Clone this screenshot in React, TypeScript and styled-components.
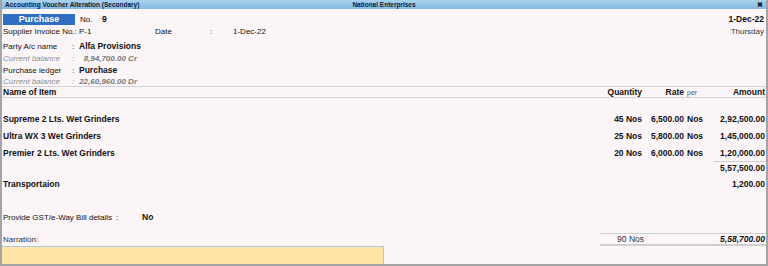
import styled, { createGlobalStyle } from 'styled-components';

const GlobalStyle = createGlobalStyle`
  html, body {
    margin: 0;
    padding: 0;
    background: #fbf5f8;
  }
  body {
    font-family: "Liberation Sans", Arial, sans-serif;
    font-size: 8px;
    color: #111;
  }
  * { box-sizing: border-box; }
`;

const Window = styled.div`
  width: 768px;
  height: 266px;
  display: flex;
  flex-direction: column;
  background: #fbf5f8;
  border-left: 2px solid #a4a4a4;
  border-right: 2px solid #a4a4a4;
  border-bottom: 2px solid #a4a4a4;
  overflow: hidden;
`;

const TitleBar = styled.div`
  height: 9px;
  flex: none;
  display: grid;
  grid-template-columns: 1fr auto 1fr;
  align-items: center;
  padding: 0 3px;
  background: linear-gradient(#a9d2ef, #83b9e0);
  color: #10203c;
  font-size: 6.5px;
  font-weight: bold;
  line-height: 9px;
`;

const TitleRight = styled.span`
  justify-self: end;
  font-size: 7px;
`;

const Body = styled.div`
  flex: 1;
  display: flex;
  flex-direction: column;
`;

const Row = styled.div<{ $h: number; $mt?: number }>`
  height: ${p => p.$h}px;
  margin-top: ${p => p.$mt ?? 0}px;
  display: flex;
  align-items: center;
  justify-content: space-between;
  flex: none;
`;

const Group = styled.div`
  display: flex;
  align-items: center;
  height: 100%;
`;

const Badge = styled.div`
  width: 72px;
  height: 11px;
  margin-left: 1px;
  background: #2f6fc3;
  color: #fff;
  font-weight: bold;
  font-size: 9px;
  display: flex;
  align-items: center;
  justify-content: center;
`;

const Cell = styled.span<{ $w?: number; $bold?: boolean; $right?: boolean; $pl?: number }>`
  display: inline-block;
  width: ${p => (p.$w ? `${p.$w}px` : 'auto')};
  font-weight: ${p => (p.$bold ? 'bold' : 'normal')};
  font-size: ${p => (p.$bold ? '8.5px' : 'inherit')};
  text-align: ${p => (p.$right ? 'right' : 'left')};
  padding-left: ${p => p.$pl ?? 0}px;
  white-space: nowrap;
`;

const Muted = styled(Cell)`
  color: #8c8c8c;
  font-style: italic;
`;

const MutedValue = styled(Cell)`
  color: #7a7a7a;
  font-style: italic;
  font-weight: bold;
`;

const RightText = styled.span<{ $bold?: boolean }>`
  padding-right: 2px;
  font-weight: ${p => (p.$bold ? 'bold' : 'normal')};
  font-size: ${p => (p.$bold ? '8.5px' : 'inherit')};
  color: ${p => (p.$bold ? '#111' : '#333')};
`;

const Grid = styled.div`
  display: grid;
  grid-template-columns: 1fr 60px 42px 30px 52px;
  align-items: center;
  font-size: 8.5px;
`;

const HeaderGrid = styled(Grid)`
  height: 12px;
  border-top: 1px solid #d2d0d2;
  border-bottom: 1px solid #d2d0d2;
  font-weight: bold;
  flex: none;
`;

const ItemRow = styled(Grid)<{ $h: number; $mt?: number }>`
  height: ${p => p.$h}px;
  margin-top: ${p => p.$mt ?? 0}px;
  font-weight: bold;
  flex: none;
`;

const Col = styled.span<{ $right?: boolean; $pl?: number; $pr?: number; $light?: boolean }>`
  text-align: ${p => (p.$right ? 'right' : 'left')};
  padding-left: ${p => p.$pl ?? 0}px;
  padding-right: ${p => p.$pr ?? 0}px;
  font-weight: ${p => (p.$light ? 'normal' : 'inherit')};
  font-size: ${p => (p.$light ? '7px' : 'inherit')};
  color: ${p => (p.$light ? '#555' : 'inherit')};
  white-space: nowrap;
`;

const SubtotalCell = styled.span`
  grid-column: 5;
  text-align: right;
  padding-right: 1px;
  align-self: stretch;
  display: flex;
  align-items: center;
  justify-content: flex-end;
  border-top: 1px solid #cfcfcf;
`;

const NarrationRow = styled.div`
  display: flex;
  align-items: stretch;
  height: 13px;
  margin-top: 10px;
  flex: none;
`;

const NarrationLabel = styled.span`
  flex: 1;
  display: flex;
  align-items: center;
  padding-left: 1px;
  color: #333;
`;

const TotalBox = styled.div`
  width: 168px;
  margin-right: -2px;
  display: grid;
  grid-template-columns: 44px 1fr;
  align-items: center;
  border-top: 1px solid #cfcfcf;
  border-bottom: 2px solid #cfcfcf;
  font-size: 8.5px;
`;

const TotalQty = styled.span`
  text-align: right;
  color: #333;
`;

const TotalAmount = styled.span`
  text-align: right;
  padding-right: 3px;
  font-weight: bold;
  font-style: italic;
`;

const NarrationInput = styled.div`
  width: 382px;
  height: 18px;
  margin-top: auto;
  background: #ffe5a8;
  border-top: 1px solid #a9cbe0;
  border-right: 1px solid #a9cbe0;
  flex: none;
`;

const items = [
  { name: 'Supreme 2 Lts. Wet Grinders', qty: '45 Nos', rate: '6,500.00', per: 'Nos', amount: '2,92,500.00' },
  { name: 'Ultra WX 3 Wet Grinders', qty: '25 Nos', rate: '5,800.00', per: 'Nos', amount: '1,45,000.00' },
  { name: 'Premier 2 Lts. Wet Grinders', qty: '20 Nos', rate: '6,000.00', per: 'Nos', amount: '1,20,000.00' },
];

export default function App() {
  return (
    <>
      <GlobalStyle />
      <Window>
        <TitleBar>
          <span>Accounting Voucher Alteration (Secondary)</span>
          <span>National Enterprises</span>
          <TitleRight>✖</TitleRight>
        </TitleBar>
        <Body>
          <Row $h={12} $mt={4}>
            <Group>
              <Badge>Purchase</Badge>
              <Cell $w={22} $pl={5}>No.</Cell>
              <Cell $bold $pl={5}>9</Cell>
            </Group>
            <RightText $bold>1-Dec-22</RightText>
          </Row>
          <Row $h={11} $mt={1}>
            <Group>
              <Cell $w={77} $pl={1}>Supplier Invoice No.:</Cell>
              <Cell $w={76}>P-1</Cell>
              <Cell $w={55}>Date</Cell>
              <Cell $w={23}>:</Cell>
              <Cell>1-Dec-22</Cell>
            </Group>
            <RightText>Thursday</RightText>
          </Row>
          <Row $h={12} $mt={3}>
            <Group>
              <Cell $w={70} $pl={1}>Party A/c name</Cell>
              <Cell $w={7}>:</Cell>
              <Cell $bold>Alfa Provisions</Cell>
            </Group>
          </Row>
          <Row $h={12}>
            <Group>
              <Muted $w={70} $pl={1}>Current balance</Muted>
              <Muted $w={7}>:</Muted>
              <MutedValue $w={58} $right>8,94,700.00 Cr</MutedValue>
            </Group>
          </Row>
          <Row $h={12}>
            <Group>
              <Cell $w={70} $pl={1}>Purchase ledger</Cell>
              <Cell $w={7}>:</Cell>
              <Cell $bold>Purchase</Cell>
            </Group>
          </Row>
          <Row $h={10}>
            <Group>
              <Muted $w={70} $pl={1}>Current balance</Muted>
              <Muted $w={7}>:</Muted>
              <MutedValue $w={58} $right>22,60,960.00 Dr</MutedValue>
            </Group>
          </Row>
          <HeaderGrid>
            <Col $pl={1}>Name of Item</Col>
            <Col $right>Quantity</Col>
            <Col $right>Rate</Col>
            <Col $pl={3} $light>per</Col>
            <Col $right $pr={1}>Amount</Col>
          </HeaderGrid>
          {items.map((it, i) => (
            <ItemRow key={it.name} $h={17} $mt={i === 0 ? 12 : 0}>
              <Col $pl={1}>{it.name}</Col>
              <Col $right>{it.qty}</Col>
              <Col $right>{it.rate}</Col>
              <Col $pl={3}>{it.per}</Col>
              <Col $right $pr={1}>{it.amount}</Col>
            </ItemRow>
          ))}
          <ItemRow $h={12}>
            <SubtotalCell>5,57,500.00</SubtotalCell>
          </ItemRow>
          <ItemRow $h={12} $mt={5}>
            <Col $pl={1}>Transportaion</Col>
            <span />
            <span />
            <span />
            <Col $right $pr={1}>1,200.00</Col>
          </ItemRow>
          <Row $h={12} $mt={21}>
            <Group>
              <Cell $w={114} $pl={1}>Provide GST/e-Way Bill details</Cell>
              <Cell $w={26}>:</Cell>
              <Cell $bold>No</Cell>
            </Group>
          </Row>
          <NarrationRow>
            <NarrationLabel>Narration:</NarrationLabel>
            <TotalBox>
              <TotalQty>90 Nos</TotalQty>
              <TotalAmount>5,58,700.00</TotalAmount>
            </TotalBox>
          </NarrationRow>
          <NarrationInput />
        </Body>
      </Window>
    </>
  );
}
